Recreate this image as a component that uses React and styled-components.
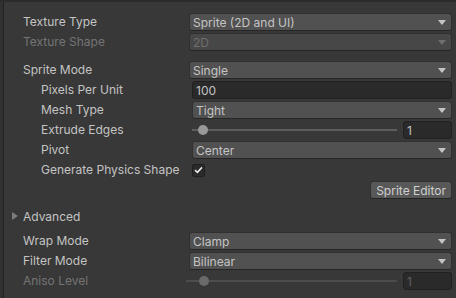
import React from 'react';
import styled, { createGlobalStyle } from 'styled-components';

const LABEL = '#c4c4c4';
const LABEL_OFF = '#747474';

const GlobalStyle = createGlobalStyle`
  html, body {
    margin: 0;
    padding: 0;
    background: #383838;
  }
  body {
    font-family: Inter, "Noto Sans", sans-serif;
    font-size: 12px;
    color: ${LABEL};
  }
`;

const Frame = styled.div`
  display: flex;
  height: 298px;
  box-sizing: border-box;
  border-top: 2px solid #2b2b2b;
`;

const Gutter = styled.div`
  width: 3px;
  flex: 0 0 auto;
  background: #313131;
  border-right: 1px solid #232323;
`;

const Content = styled.div`
  flex: 1 1 auto;
  padding: 10px 4px 0 19px;
`;

const Row = styled.div`
  display: grid;
  grid-template-columns: 166px 1fr;
  align-items: center;
  height: 20px;
  margin-top: ${p => p.$gap || 0}px;
`;

const Label = styled.div`
  padding-left: ${p => (p.$indent ? 18 : 0)}px;
  color: ${p => (p.$disabled ? LABEL_OFF : LABEL)};
  white-space: nowrap;
  line-height: 20px;
`;

const Field = styled.div`
  margin-left: ${p => (p.$indent ? 3 : 0)}px;
  display: flex;
  align-items: center;
  min-width: 0;
`;

const DropBox = styled.div`
  flex: 1 1 auto;
  height: 18px;
  box-sizing: border-box;
  display: flex;
  align-items: center;
  justify-content: space-between;
  padding: 0 5px 0 3px;
  border: 1px solid #303030;
  border-bottom-color: #262626;
  border-radius: 3px;
  background: ${p => (p.$disabled ? '#474747' : '#515151')};
  color: ${p => (p.$disabled ? '#6e6e6e' : LABEL)};
`;

const Arrow = styled.span`
  width: 0;
  height: 0;
  border-left: 4px solid transparent;
  border-right: 4px solid transparent;
  border-top: 5px solid ${p => (p.$disabled ? '#6e6e6e' : LABEL)};
`;

const TextBox = styled.div`
  flex: ${p => (p.$fixed ? '0 0 49px' : '1 1 auto')};
  height: 18px;
  box-sizing: border-box;
  display: flex;
  align-items: center;
  padding: 0 3px;
  border: 1px solid #212121;
  border-radius: 3px;
  background: #2a2a2a;
  color: ${p => (p.$disabled ? '#616161' : LABEL)};
`;

const Track = styled.div`
  position: relative;
  flex: 1 1 auto;
  height: 2px;
  margin-right: 6px;
  margin-left: ${p => (p.$disabled ? -3 : 0)}px;
  background: ${p => (p.$disabled ? '#4c4c4c' : '#5e5e5e')};
`;

const Thumb = styled.span`
  position: absolute;
  top: -4px;
  width: 10px;
  height: 10px;
  border-radius: 50%;
  background: ${p => (p.$disabled ? '#6a6a6a' : '#999999')};
`;

const Check = styled.span`
  width: 13px;
  height: 13px;
  box-sizing: border-box;
  border: 1px solid #1f1f1f;
  border-radius: 2px;
  background: #2a2a2a;
  display: flex;
  align-items: center;
  justify-content: center;
`;

const ButtonRow = styled.div`
  display: flex;
  justify-content: flex-end;
  align-items: center;
  height: 20px;
`;

const Button = styled.div`
  height: 18px;
  box-sizing: border-box;
  padding: 0 5px;
  display: flex;
  align-items: center;
  border: 1px solid #303030;
  border-bottom-color: #242424;
  border-radius: 3px;
  background: #585858;
  color: #d0d0d0;
`;

const Foldout = styled.div`
  display: flex;
  align-items: center;
  height: 20px;
  margin: 6px 0 5px -11px;
`;

const Triangle = styled.span`
  width: 0;
  height: 0;
  border-top: 4px solid transparent;
  border-bottom: 4px solid transparent;
  border-left: 6px solid #7c7c7c;
  margin-right: 5px;
`;

function Dropdown({ label, value, indent, disabled, gap }) {
  return (
    <Row $gap={gap}>
      <Label $indent={indent} $disabled={disabled}>{label}</Label>
      <Field $indent={indent}>
        <DropBox $disabled={disabled}>
          <span>{value}</span>
          <Arrow $disabled={disabled} />
        </DropBox>
      </Field>
    </Row>
  );
}

function Slider({ label, value, min, max, indent, disabled }) {
  const pct = (value - min) / (max - min);
  return (
    <Row>
      <Label $indent={indent} $disabled={disabled}>{label}</Label>
      <Field $indent={indent}>
        <Track $disabled={disabled}>
          <Thumb $disabled={disabled} style={{ left: `calc(${pct} * (100% - 10px))` }} />
        </Track>
        <TextBox $fixed $disabled={disabled}>{value}</TextBox>
      </Field>
    </Row>
  );
}

export default function App() {
  return (
    <>
      <GlobalStyle />
      <Frame>
        <Gutter />
        <Content>
          <Dropdown label="Texture Type" value="Sprite (2D and UI)" />
          <Dropdown label="Texture Shape" value="2D" disabled />

          <Dropdown label="Sprite Mode" value="Single" gap={8} />
          <Row>
            <Label $indent>Pixels Per Unit</Label>
            <Field $indent>
              <TextBox>100</TextBox>
            </Field>
          </Row>
          <Dropdown label="Mesh Type" value="Tight" indent />
          <Slider label="Extrude Edges" value={1} min={0} max={32} indent />
          <Dropdown label="Pivot" value="Center" indent />
          <Row>
            <Label $indent>Generate Physics Shape</Label>
            <Field $indent>
              <Check>
                <svg width="9" height="8" viewBox="0 0 9 8">
                  <path d="M1 4.2 L3.4 6.4 L8 1.4" fill="none" stroke="#e6e6e6" strokeWidth="1.6" />
                </svg>
              </Check>
            </Field>
          </Row>
          <ButtonRow>
            <Button>Sprite Editor</Button>
          </ButtonRow>

          <Foldout>
            <Triangle />
            <span>Advanced</span>
          </Foldout>

          <Dropdown label="Wrap Mode" value="Clamp" />
          <Dropdown label="Filter Mode" value="Bilinear" />
          <Slider label="Aniso Level" value={1} min={0} max={16} disabled />
        </Content>
      </Frame>
    </>
  );
}
